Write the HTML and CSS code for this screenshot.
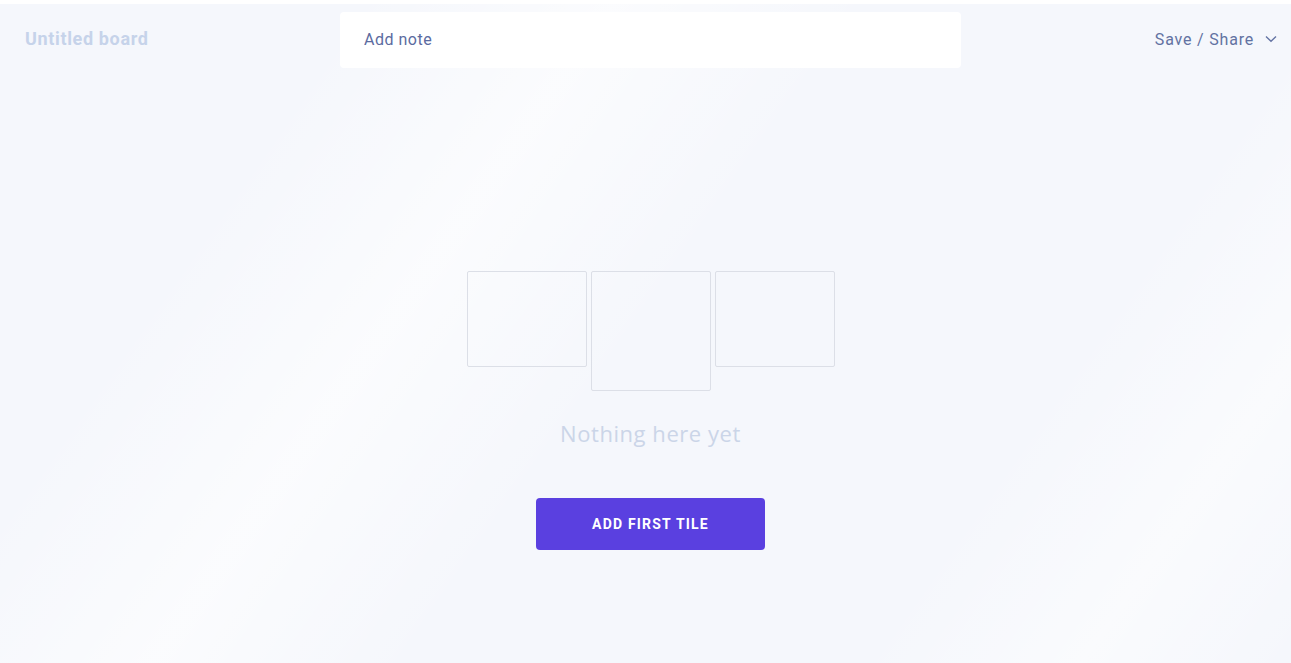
FILE: index.html
```html
<!DOCTYPE html>
<html lang="en">
<head>
    <meta charset="UTF-8">
    <meta name="viewport" content="width=device-width, initial-scale=1.0">
    <title>Untitled board</title>
    <link rel="stylesheet" href="styles.css">
</head>
<body>
    <div class="board">
        <header class="topbar">
            <div class="title">Untitled board</div>
            <input class="note" type="text" placeholder="Add note">
            <div class="actions">
                <button class="share">Save / Share
                    <svg width="12" height="8" viewBox="0 0 12 8"><path d="M1 1.5 L6 6.2 L11 1.5" fill="none" stroke="#6474a4" stroke-width="1.4"/></svg>
                </button>
            </div>
        </header>

        <main class="empty">
            <div class="tiles">
                <div class="tile"></div>
                <div class="tile tall"></div>
                <div class="tile"></div>
            </div>
            <p class="empty-text">Nothing here yet</p>
            <button class="add-btn">Add first tile</button>
        </main>
    </div>
</body>
</html>
```

FILE: styles.css
```css
html, body {
    margin: 0;
    height: 100%;
}

body {
    background: #fff;
    padding-top: 4px;
    box-sizing: border-box;
    font-family: Roboto, "Liberation Sans", sans-serif;
}

.board {
    min-height: 100%;
    background:
        linear-gradient(125deg, rgba(255,255,255,0) 20%, rgba(255,255,255,0.6) 35%, rgba(255,255,255,0) 50%, rgba(255,255,255,0) 75%, rgba(255,255,255,0.5) 88%, rgba(255,255,255,0) 100%),
        #f5f7fc;
}

/* barra superior */
.topbar {
    display: flex;
    align-items: center;
    padding: 8px 14px 8px 25px;
}

.title {
    width: 315px;
    font-size: 18px;
    line-height: 20px;
    font-weight: 700;
    letter-spacing: 0.65px;
    color: #c6d3ea;
    margin-top: -2px;
}

.note {
    width: 621px;
    height: 56px;
    box-sizing: border-box;
    border: none;
    border-radius: 4px;
    background: #fff;
    padding: 0 24px 2px;
    font-family: Roboto, "Liberation Sans", sans-serif;
    font-size: 16px;
    letter-spacing: 0.5px;
    color: #5b6b9f;
    outline: none;
}

.note::placeholder {
    color: #5b6b9f;
}

.actions {
    flex: 1;
    display: flex;
    justify-content: flex-end;
    margin-top: -2px;
}

.share {
    display: flex;
    align-items: center;
    gap: 11px;
    border: none;
    background: none;
    padding: 0;
    font-family: Roboto, "Liberation Sans", sans-serif;
    font-size: 16px;
    letter-spacing: 0.8px;
    color: #6272a2;
    cursor: pointer;
}

/* estado vacio */
.empty {
    display: flex;
    flex-direction: column;
    align-items: center;
    padding: 195px 0 0 10px;
}

.tiles {
    display: flex;
    align-items: flex-start;
    gap: 4px;
}

.tile {
    width: 120px;
    height: 96px;
    box-sizing: border-box;
    border: 1px solid #dcdfe7;
    border-radius: 2px;
}

.tile.tall {
    height: 120px;
}

.empty-text {
    margin: 27px 0 0;
    font-family: "Open Sans", sans-serif;
    font-size: 22px;
    line-height: 30px;
    letter-spacing: 0.55px;
    color: #cbd5e8;
}

.add-btn {
    margin-top: 50px;
    width: 229px;
    height: 52px;
    border: none;
    border-radius: 4px;
    background: #5a40e0;
    color: #fff;
    font-family: Roboto, "Liberation Sans", sans-serif;
    font-size: 14px;
    font-weight: 700;
    letter-spacing: 1.2px;
    text-transform: uppercase;
    cursor: pointer;
}
```
